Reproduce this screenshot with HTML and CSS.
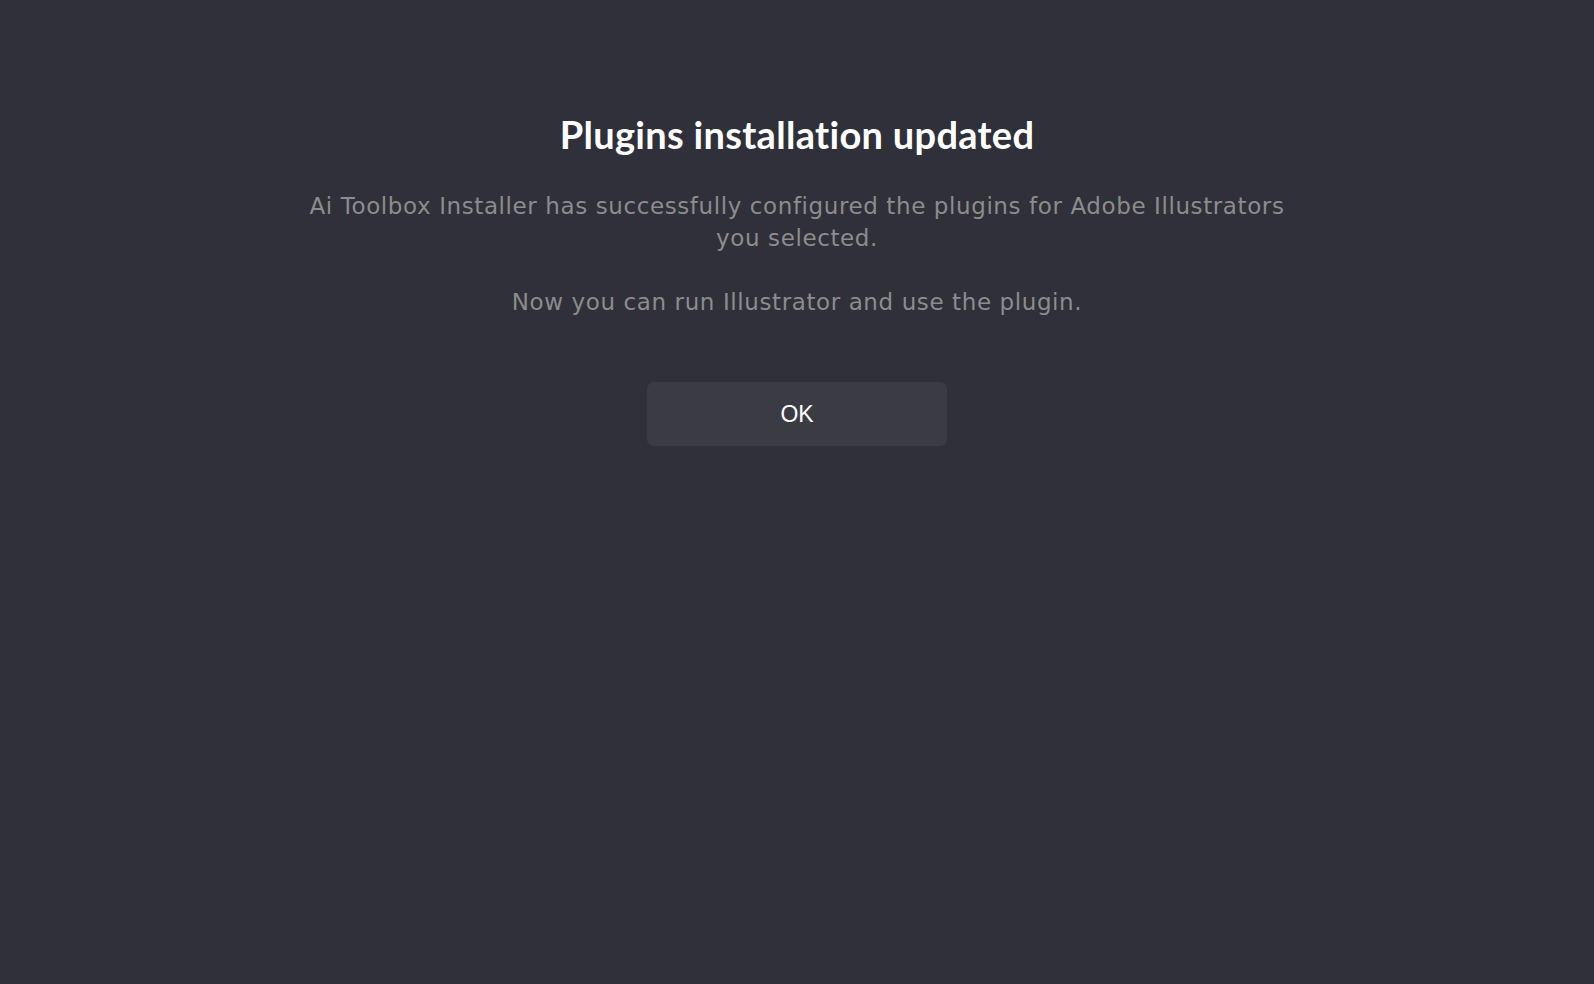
FILE: index.html
```html
<!DOCTYPE html>
<html>
<head>
<meta charset="utf-8">
<link rel="stylesheet" href="styles.css">
</head>
<body>
<main class="page">
  <h1 class="title">Plugins installation updated</h1>
  <p class="message">Ai Toolbox Installer has successfully configured the plugins for Adobe Illustrators you selected.</p>
  <p class="message note">Now you can run Illustrator and use the plugin.</p>
  <button class="ok-btn">OK</button>
</main>
</body>
</html>
```
FILE: styles.css
```css
html, body {
  margin: 0;
  padding: 0;
  height: 100%;
  background: #30303a;
}
.page {
  display: flex;
  flex-direction: column;
  align-items: center;
  padding-top: 112px;
  text-align: center;
}
.title {
  margin: 0;
  font-family: "Lato", "Open Sans", sans-serif;
  font-weight: 700;
  font-size: 38px;
  letter-spacing: 0.3px;
  font-variant-ligatures: none;
  line-height: 44px;
  color: #ffffff;
}
.message {
  margin: 34px 0 0;
  max-width: 1010px;
  font-family: "DejaVu Sans", sans-serif;
  font-size: 23px;
  letter-spacing: 0.6px;
  line-height: 32px;
  color: #8c8c8c;
}
.note {
  margin-top: 32px;
}
.ok-btn {
  margin-top: 64px;
  width: 300px;
  height: 64px;
  border: none;
  border-radius: 7px;
  background: #3b3b44;
  color: #ffffff;
  font-family: "Liberation Sans", Arial, sans-serif;
  font-size: 23px;
  cursor: pointer;
}
```
